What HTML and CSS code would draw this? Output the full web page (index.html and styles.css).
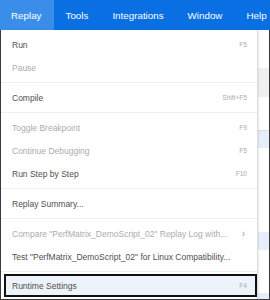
FILE: index.html
```html
<!DOCTYPE html>
<html>
<head>
<meta charset="utf-8">
<link rel="stylesheet" href="styles.css">
</head>
<body>
<div class="bar">
  <div class="tab active">Replay</div>
  <div class="tab">Tools</div>
  <div class="tab">Integrations</div>
  <div class="tab">Window</div>
  <div class="tab">Help</div>
</div>
<div class="screen">
  <div class="menu">
    <div class="item"><span>Run</span><span class="key">F5</span></div>
    <div class="item off"><span>Pause</span></div>
    <div class="sep"></div>
    <div class="item"><span>Compile</span><span class="key">Shift+F5</span></div>
    <div class="sep"></div>
    <div class="item off"><span>Toggle Breakpoint</span><span class="key">F9</span></div>
    <div class="item off"><span>Continue Debugging</span><span class="key">F5</span></div>
    <div class="item"><span>Run Step by Step</span><span class="key">F10</span></div>
    <div class="sep"></div>
    <div class="item"><span>Replay Summary...</span></div>
    <div class="sep"></div>
    <div class="item off"><span>Compare "PerfMatrix_DemoScript_02" Replay Log with...</span><span class="chev">›</span></div>
    <div class="item"><span>Test "PerfMatrix_DemoScript_02" for Linux Compatibility...</span></div>
    <div class="sep last"></div>
    <div class="item focus"><span>Runtime Settings</span><span class="key">F4</span></div>
  </div>
  <div class="backdrop">
    <div class="gap g1"></div>
    <div class="band gray b1"></div>
    <div class="gap g2"></div>
    <div class="band blue b2"></div>
    <div class="gap g3"></div>
    <div class="band blue b3"></div>
    <div class="gap g4"></div>
    <div class="band blue b4"></div>
  </div>
</div>
</body>
</html>
```
FILE: styles.css
```css
html, body {
  margin: 0;
  padding: 0;
  background: #ffffff;
}
body {
  width: 270px;
  height: 300px;
  overflow: hidden;
  font-family: "Liberation Sans", Arial, sans-serif;
}
.bar {
  display: flex;
  height: 30px;
  background: #0a6fe2;
  color: #ffffff;
  font-size: 9.8px;
  align-items: stretch;
}
.tab {
  display: flex;
  align-items: center;
  padding: 0 12px;
  white-space: nowrap;
}
.tab.active {
  background: #3a8ee9;
  padding-left: 11px;
}
.screen {
  display: flex;
  height: 269px;
  border: 1px solid #3a3a3a;
  border-top: none;
}
.menu {
  width: 257px;
  flex: none;
  box-sizing: border-box;
  padding-top: 3px;
  background: #ffffff;
  border-right: 1px solid #dcdcdc;
  box-shadow: 1px 0 2px rgba(0,0,0,0.08);
  position: relative;
  z-index: 1;
}
.item {
  display: flex;
  align-items: center;
  justify-content: space-between;
  height: 23px;
  padding: 0 10px 0 11px;
  font-size: 8.5px;
  color: #505050;
  white-space: nowrap;
}
.item.off {
  color: #acacac;
}
.key {
  font-size: 6.6px;
  color: #ababab;
}
.chev {
  font-size: 10px;
  color: #9a9a9a;
  padding-right: 2px;
}
.sep {
  height: 1px;
  background: #efefef;
  margin: 3px 0;
}
.sep.last {
  margin: 3px 0 2px;
}
.item.focus {
  box-sizing: border-box;
  margin: 0 0 0 3px;
  width: 253px;
  border: 2px solid #111111;
  background: #edf3fb;
  padding: 0 8px 0 6px;
}
.backdrop {
  flex: 1;
  display: flex;
  flex-direction: column;
  background: #ffffff;
}
.gap.g1 { height: 38px; }
.band.b1 { height: 29px; }
.gap.g2 { height: 33px; border-bottom: 1px solid #dcdcdc; }
.band.b2 { height: 17px; }
.gap.g3 { height: 84px; }
.band.b3 { height: 18px; }
.gap.g4 { height: 43px; }
.band.b4 { flex: 1; }
.gray { background: #f0f0f0; }
.blue { background: #e6eef9; }
```
